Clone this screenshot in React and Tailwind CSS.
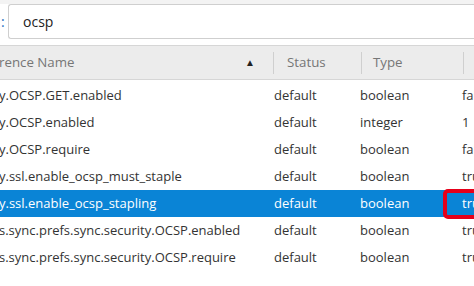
import React from "react";

const rows = [
  ["y.OCSP.GET.enabled", "default", "boolean", "false"],
  ["y.OCSP.enabled", "default", "integer", "1"],
  ["y.OCSP.require", "default", "boolean", "false"],
  ["y.ssl.enable_ocsp_must_staple", "default", "boolean", "true"],
  ["y.ssl.enable_ocsp_stapling", "default", "boolean", "true"],
  ["s.sync.prefs.sync.security.OCSP.enabled", "default", "boolean", "true"],
  ["s.sync.prefs.sync.security.OCSP.require", "default", "boolean", "true"],
];

export default function App() {
  return (
    <div
      className="w-[474px] h-[286px] overflow-hidden bg-white text-[#333] relative"
      style={{ fontFamily: '"Open Sans", "Noto Sans", sans-serif' }}
    >
      <div className="h-[4px] bg-[#f3f3f3]" />
      <div className="flex items-center h-[35px]">
        <div className="w-[8px] shrink-0 text-[#2a6fbf] text-[14px] leading-none pl-[1px]">:</div>
        <div className="flex-1 h-[35px] border border-[#cfcfcf] border-r-0 rounded-l-[3px] flex items-center pl-[14px] text-[14px] text-[#222] -mr-[2px]">
          ocsp
        </div>
      </div>
      <div className="h-[6px]" />
      <div className="flex h-[35px] bg-[#ececec] border-y border-[#d6d6d6] text-[13.3px] text-[#767676] items-center">
        <div className="w-[273px] shrink-0 flex items-center pr-[18px]">
          <span className="-ml-[1px]">rence Name</span>
          <span className="ml-auto text-[10px] text-[#222]">▲</span>
        </div>
        <div className="w-[1px] shrink-0 h-[22px] bg-[#cfcfcf]" />
        <div className="w-[87px] shrink-0 pl-[13px]">Status</div>
        <div className="w-[1px] shrink-0 h-[22px] bg-[#cfcfcf]" />
        <div className="w-[101px] shrink-0 pl-[11px]">Type</div>
        <div className="w-[1px] shrink-0 h-[22px] bg-[#cfcfcf]" />
        <div className="flex-1" />
      </div>
      <div className="h-[2px]" />
      {rows.map((r, i) => {
        const sel = i === 4;
        return (
          <div
            key={i}
            className={
              "flex h-[27px] items-center text-[13px] whitespace-nowrap " +
              (sel ? "bg-[#0a84d6] text-white" : "")
            }
          >
            <div className="w-[275px] shrink-0 overflow-hidden -ml-[1px]">{r[0]}</div>
            <div className="w-[86px] shrink-0">{r[1]}</div>
            <div className="w-[102px] shrink-0">{r[2]}</div>
            <div className="shrink-0">{r[3]}</div>
          </div>
        );
      })}
      <div className="absolute left-[443px] top-[189px] w-[40px] h-[30px] border-[4px] border-[#e6001a] rounded-[5px]" />
    </div>
  );
}
